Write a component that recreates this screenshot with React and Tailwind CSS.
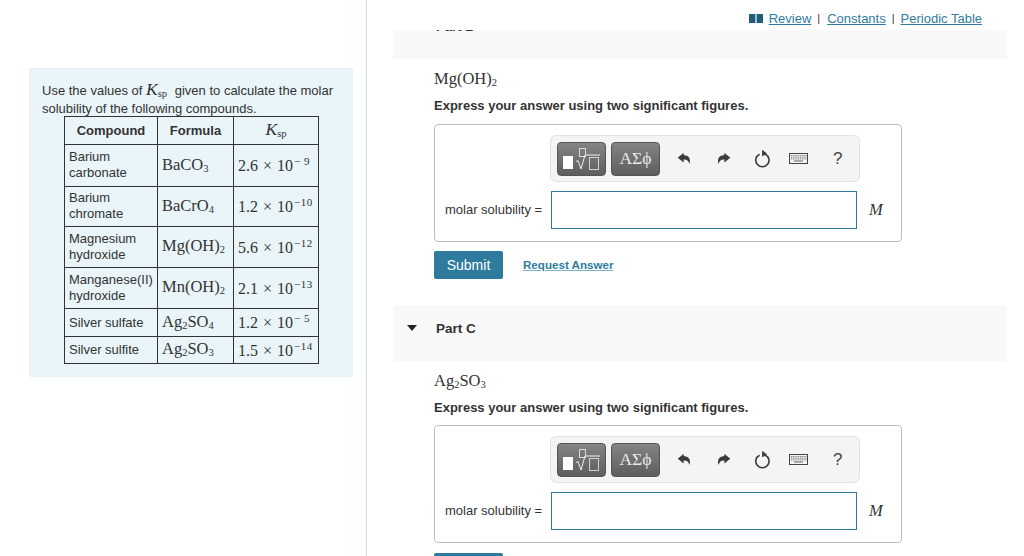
import React from "react";

const sans = "font-['Liberation_Sans',Arial,sans-serif]";
const serif = "font-['Liberation_Serif','Times_New_Roman',serif]";

function Sub({ children }) {
  return <sub className="static text-[10.5px] leading-none align-[-2px]">{children}</sub>;
}

function KSci({ a, e }) {
  return (
    <span className={`${serif} text-[16px] text-[#333] whitespace-nowrap [word-spacing:1px]`}>
      {a} × 10
      <sup className="static ml-[1px] text-[11px] leading-none align-[6px] tracking-[0.5px] [word-spacing:0]">{e}</sup>
    </span>
  );
}

const rows = [
  { name: ["Barium", "carbonate"], f: <>BaCO<Sub>3</Sub></>, a: "2.6", e: "− 9", h: "h-[42px]", p: "pb-[2px]" },
  { name: ["Barium", "chromate"], f: <>BaCrO<Sub>4</Sub></>, a: "1.2", e: "−10", h: "h-[40px]", p: "pb-[2px]" },
  { name: ["Magnesium", "hydroxide"], f: <>Mg(OH)<Sub>2</Sub></>, a: "5.6", e: "−12", h: "h-[41px]", p: "" },
  { name: ["Manganese(II)", "hydroxide"], f: <>Mn(OH)<Sub>2</Sub></>, a: "2.1", e: "−13", h: "h-[41px]", p: "" },
  { name: ["Silver sulfate"], f: <>Ag<Sub>2</Sub>SO<Sub>4</Sub></>, a: "1.2", e: "− 5", h: "h-[28px]", p: "" },
  { name: ["Silver sulfite"], f: <>Ag<Sub>2</Sub>SO<Sub>3</Sub></>, a: "1.5", e: "−14", h: "h-[27px]", p: "" },
];

function KTable() {
  return (
    <table className="ml-[35px] w-[254px] table-fixed border-collapse text-[13px] leading-[16px] text-[#333]">
      <colgroup>
        <col className="w-[93px]" />
        <col className="w-[76px]" />
        <col className="w-[85px]" />
      </colgroup>
      <thead>
        <tr className="h-[28px]">
          <th className="border border-[#333] text-center text-[13px] font-bold">Compound</th>
          <th className="border border-[#333] text-center text-[13px] font-bold">Formula</th>
          <th className={`border border-[#333] text-center ${serif} text-[17.5px] font-normal italic`}>
            K<span className="not-italic text-[10.5px] align-[-2px] leading-none">sp</span>
          </th>
        </tr>
      </thead>
      <tbody>
        {rows.map((r) => (
          <tr key={r.a + r.e} className={r.h}>
            <td className={`border border-[#333] pl-[4px] pr-0 whitespace-nowrap ${r.p}`}>
              {r.name.map((n) => (
                <div key={n}>{n}</div>
              ))}
            </td>
            <td className={`border border-[#333] pl-[4px] ${serif} text-[16.5px] whitespace-nowrap`}>{r.f}</td>
            <td className="border border-[#333] pl-[4px]">
              <KSci a={r.a} e={r.e} />
            </td>
          </tr>
        ))}
      </tbody>
    </table>
  );
}

function Templates() {
  return (
    <svg width="40" height="26" viewBox="0 0 40 26" aria-hidden="true">
      <rect x="1" y="10" width="10" height="13" fill="#fff" />
      <rect x="17.5" y="2.5" width="6" height="8" fill="none" stroke="#d8d8d8" />
      <path d="M14 15.5l2-1 3 8.5 4-14h15" fill="none" stroke="#efefef" strokeWidth="1" />
      <rect x="27.5" y="11.5" width="9" height="12" fill="none" stroke="#d0d0d0" />
    </svg>
  );
}

function Undo({ flip }) {
  return (
    <svg width="18" height="18" viewBox="0 0 14 14" className={flip ? "-scale-x-100" : ""} aria-hidden="true">
      <path d="M6.2 1.2L.7 5.8l5.5 4.4V7.4c2.8-.2 4.6.8 5.4 4.2 1.2-3.6.6-7.9-5.4-8.4z" fill="#3b3b3b" />
    </svg>
  );
}

function Reset() {
  return (
    <svg width="17" height="19" viewBox="0 0 17 19" aria-hidden="true">
      <path d="M5.6 5.2a6.6 6.6 0 1 0 5.6 0" fill="none" stroke="#3a3a3a" strokeWidth="1.6" />
      <path d="M8.2.8l5 3.9-5.2 2.6z" fill="#3a3a3a" />
    </svg>
  );
}

function Keyboard() {
  const keys = [];
  for (let r = 0; r < 3; r++) {
    for (let c = 0; c < 9; c++) {
      keys.push(<rect key={`${r}-${c}`} x={1.9 + c * 1.8} y={2 + r * 1.7} width="1.2" height="1.1" fill="#888" />);
    }
  }
  return (
    <svg width="19" height="11" viewBox="0 0 19 11" aria-hidden="true">
      <rect x="0.5" y="0.5" width="18" height="10" fill="#f4f4f4" stroke="#444" />
      {keys}
      <rect x="5" y="7.4" width="9" height="1.2" fill="#777" />
    </svg>
  );
}

function Toolbar() {
  const btn =
    "flex h-[34px] w-[49px] items-center justify-center rounded-[4px] border border-[#555] bg-gradient-to-b from-[#848484] to-[#5e5e5e]";
  return (
    <div className="ml-[115px] flex h-[47px] w-[310px] items-center rounded-[6px] border border-[#e2e2e2] bg-[#f4f4f4] pl-[6px]">
      <div className={btn}>
        <Templates />
      </div>
      <div className={`${btn} ml-[5px] ${serif} text-[17.5px] text-[#e8e8e8]`}>ΑΣϕ</div>
      <div className="ml-[17px] flex w-[15px] justify-center">
        <Undo />
      </div>
      <div className="ml-[24px] flex w-[15px] justify-center">
        <Undo flip />
      </div>
      <div className="ml-[23px] flex w-[17px] justify-center">
        <Reset />
      </div>
      <div className="ml-[18px] flex w-[19px] justify-center">
        <Keyboard />
      </div>
      <div className="ml-[25px] text-[17px] text-[#444]">?</div>
    </div>
  );
}

function AnswerBox() {
  return (
    <div className="h-[118px] rounded-[4px] border border-[#bdbdbd] pt-[10px]">
      <Toolbar />
      <div className="mt-[9px] flex items-center">
        <span className="ml-[10px] w-[106px] whitespace-nowrap text-[13px] text-[#333]">molar solubility =</span>
        <div className="h-[38px] w-[306px] border border-[#2e7b9e] bg-white" />
        <span className={`ml-[12px] ${serif} text-[16.5px] italic text-[#333]`}>M</span>
      </div>
    </div>
  );
}

function Question({ formula, boxGap }) {
  return (
    <div className="ml-[41px] w-[468px]">
      <div className={`${serif} text-[16.5px] leading-[20px] text-[#333]`}>{formula}</div>
      <div className="mt-[9px] text-[13px] font-bold leading-[16px] text-[#333]">
        Express your answer using two significant figures.
      </div>
      <div className={boxGap}>
        <AnswerBox />
      </div>
    </div>
  );
}

export default function App() {
  return (
    <div className={`flex h-screen w-[1024px] overflow-hidden bg-white ${sans}`}>
      <div className="w-[367px] shrink-0 border-r border-[#c9dbe6] pl-[29px] pt-[68px]">
        <div className="h-[309px] w-[324px] border-t border-[#e2eef1] bg-[#e9f5f8] pl-[13px] pt-[12px]">
          <p className="text-[13px] leading-[18px] text-[#333]">
            Use the values of{" "}
            <span className={`${serif} mr-[4px] text-[17.5px] italic leading-none`}>
              K<span className="not-italic text-[10.5px] align-[-2px] leading-none">sp</span>
            </span>{" "}
            given to calculate the molar
            <br />
            solubility of the following compounds.
          </p>
          <div className="-ml-[13px] -mt-[2px]">
            <KTable />
          </div>
        </div>
      </div>

      <div className="min-w-0 flex-1">
        <div className="flex h-[30px] w-[615px] items-center justify-end pt-[7px] text-[13px] text-[#2e7b9e]">
          <svg width="14" height="9" viewBox="0 0 14 9" aria-hidden="true" className="mr-[6px]">
            <path d="M0 0h6.4v9H0zM7.6 0H14v9H7.6z" fill="#1f5d7a" />
          </svg>
          <a className="underline">Review</a>
          <span className="ml-[6px] mr-[7px] text-[11px] text-[#333]">|</span>
          <a className="underline">Constants</a>
          <span className="mx-[6px] text-[11px] text-[#333]">|</span>
          <a className="underline">Periodic Table</a>
        </div>

        <div className="ml-[26px] h-[29px] w-[614px] overflow-hidden bg-[#f8f8f8] pl-[43px]">
          <div className="-mt-[11px] text-[13px] font-bold leading-[16px] text-[#333]">Part B</div>
        </div>

        <div className="mt-[10px] ml-[26px]">
          <Question formula={<>Mg(OH)<Sub>2</Sub></>} boxGap="mt-[10px]" />
          <div className="ml-[41px] mt-[9px] flex items-center">
            <div className="flex h-[28px] w-[69px] items-center justify-center rounded-[2px] bg-[#2e7b9e] text-[14px] text-white">
              Submit
            </div>
            <a className="ml-[20px] text-[11.6px] font-bold text-[#2e7b9e] underline decoration-[#7fb2c9]">Request Answer</a>
          </div>
        </div>

        <div className="ml-[26px] mt-[26px] flex h-[56px] w-[614px] items-start bg-[#f8f8f8] pl-[14px] pt-[16px]">
          <div className="mt-[4px] h-0 w-0 border-x-[5.5px] border-t-[6px] border-x-transparent border-t-[#222]" />
          <div className="ml-[19px] text-[13.5px] font-bold leading-[16px] text-[#333]">Part C</div>
        </div>

        <div className="mt-[10px] ml-[26px]">
          <Question formula={<>Ag<Sub>2</Sub>SO<Sub>3</Sub></>} boxGap="mt-[9px]" />
          <div className="ml-[41px] mt-[10px] h-[28px] w-[69px] rounded-[2px] bg-[#2e7b9e]" />
        </div>
      </div>
    </div>
  );
}
